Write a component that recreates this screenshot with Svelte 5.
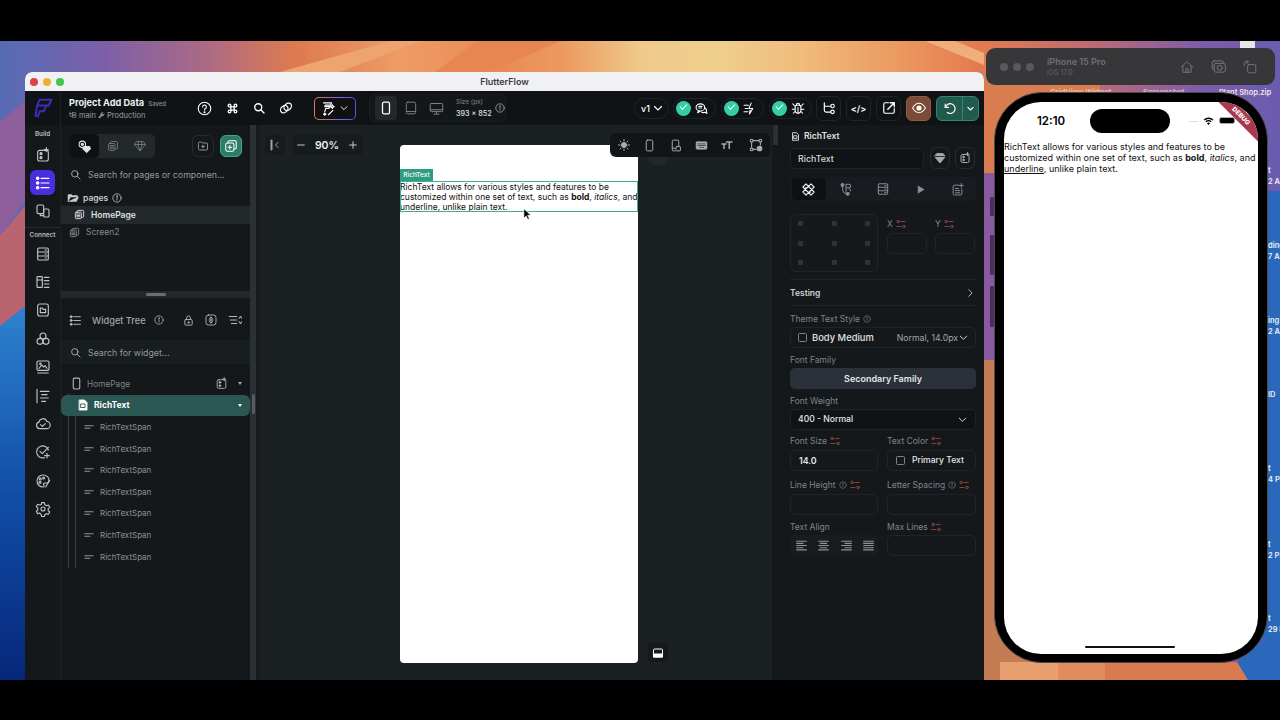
<script>
  const paths = {
    widgetAdd: '<rect x="4" y="5" width="16" height="16" rx="3"/><circle cx="9" cy="10" r="1.6" fill="currentColor"/><circle cx="9" cy="16" r="1.6" fill="currentColor"/><path d="M17 1v6M14 4h6"/>',
    tree: '<circle cx="4" cy="5" r="1.8" fill="currentColor"/><circle cx="4" cy="12" r="1.8" fill="currentColor"/><circle cx="4" cy="19" r="1.8" fill="currentColor"/><path d="M9 5h12M9 12h12M9 19h12"/>',
    screens: '<rect x="3" y="3" width="10" height="13" rx="2"/><rect x="13" y="9" width="8" height="12" rx="2"/><path d="M8 16v3h5"/>',
    db: '<rect x="4" y="3" width="16" height="18" rx="2"/><path d="M4 9h16M4 15h16M15 6h2M15 12h2M15 18h2"/>',
    table: '<rect x="3" y="4" width="8" height="16" rx="1"/><path d="M3 9h8M14 5h7M14 10h7M14 15h7M14 20h7"/>',
    file: '<rect x="4" y="3" width="16" height="18" rx="3"/><path d="M8 9h3l1 2h4v5H8z"/>',
    rings: '<circle cx="12" cy="7.5" r="4.5"/><circle cx="7.5" cy="15.5" r="4.5"/><circle cx="16.5" cy="15.5" r="4.5"/>',
    media: '<rect x="3" y="3" width="18" height="14" rx="2"/><path d="M6 14l4-5 3 3 2-2 3 4M4 21h16"/><circle cx="8" cy="7" r="1"/>',
    logs: '<path d="M3 2v20M8 5h13M10 10h8M8 15h12M10 20h6"/>',
    cloud: '<path d="M7 19a5 5 0 0 1-1-9.8A6 6 0 0 1 17.6 8 5.5 5.5 0 0 1 17 19z"/><path d="M8.5 13l2.5 2.5 4.5-4"/>',
    checkPlus: '<path d="M20 9a9 9 0 1 0-6 11.5"/><path d="M7.5 11l3.5 3.5L20 5M18 14v7M14.5 17.5h7"/>',
    palette: '<path d="M12 3a9 9 0 1 0 0 18c2 0 2-2 1-3s0-3 2-3h3c2 0 3-2 3-4 0-5-4-8-9-8z"/><circle cx="8" cy="9" r="1.5"/><circle cx="13" cy="7.5" r="1.5"/><circle cx="7.5" cy="14" r="1.5"/><path d="M22 11l-6 10"/>',
    gear: '<circle cx="12" cy="12" r="3"/><path d="M10 2.5h4l.6 3 2.6 1.5 2.9-1 2 3.5-2.3 2v3l2.3 2-2 3.5-2.9-1-2.6 1.5-.6 3h-4l-.6-3L6.8 18l-2.9 1-2-3.5 2.3-2v-3l-2.3-2 2-3.5 2.9 1L9.4 5.5z"/>',
    help: '<circle cx="12" cy="12" r="10"/><path d="M9 9.5a3 3 0 1 1 4.5 2.6c-1 .6-1.5 1.2-1.5 2.4"/><circle cx="12" cy="18" r=".8" fill="currentColor"/>',
    cmd: '<path d="M9 9h6v6H9zM9 9H6.5A2.5 2.5 0 1 1 9 6.5zM15 9V6.5A2.5 2.5 0 1 1 17.5 9zM15 15h2.5a2.5 2.5 0 1 1-2.5 2.5zM9 15v2.5A2.5 2.5 0 1 1 6.5 15z"/>',
    search: '<circle cx="10.5" cy="10.5" r="7"/><path d="M16 16l6 6"/>',
    link: '<ellipse cx="9" cy="14" rx="7" ry="5.5" transform="rotate(-40 9 14)"/><ellipse cx="15" cy="10" rx="7" ry="5.5" transform="rotate(-40 15 10)"/>',
    chev: '<path d="M5 9l7 7 7-7"/>',
    chevR: '<path d="M9 4l8 8-8 8"/>',
    phone: '<rect x="6" y="2" width="12" height="20" rx="2.5"/>',
    tablet: '<rect x="4" y="2" width="16" height="20" rx="2.5"/><path d="M4 18h16"/>',
    desktop: '<rect x="2" y="4" width="20" height="13" rx="1.5"/><path d="M2 14h20M12 17v3M8 21h8"/>',
    info: '<circle cx="12" cy="12" r="10"/><path d="M12 11v6"/><circle cx="12" cy="7.5" r=".8" fill="currentColor"/>',
    chat: '<ellipse cx="10" cy="10" rx="8" ry="6.5"/><path d="M6 16l-1 4 4-3M7 8h6M7 11h5M18 11c2 1 4 3 3 6l1 4-4-2c-2 1-4 .6-6-.6"/>',
    bolt: '<path d="M15 2l-4 10h7l-6 10 1-7"/><path d="M2 6h8M4 12h5M2 18h7"/>',
    bug: '<rect x="7" y="7" width="10" height="14" rx="5"/><path d="M9 7a3 3 0 0 1 6 0M12 11v10M3 5l4 4M21 5l-4 4M2 14h5M22 14h-5M4 21l3-3M20 21l-3-3"/>',
    flow: '<path d="M4 3v13a3 3 0 0 0 3 3h8M4 9h11"/><circle cx="18" cy="8.5" r="3"/><circle cx="18" cy="18.5" r="3"/>',
    open: '<path d="M11 3H5a2 2 0 0 0-2 2v14a2 2 0 0 0 2 2h14a2 2 0 0 0 2-2v-6"/><path d="M10 14L21 3M14 3h7v7" stroke-width="2.4"/>',
    eye: '<path d="M1 12c3-5 7-8 11-8s8 3 11 8c-3 5-7 8-11 8s-8-3-11-8z"/><circle cx="12" cy="12" r="3.5" fill="currentColor"/>',
    undo: '<path d="M4 4v6h6"/><path d="M4.5 10A9 9 0 1 1 8 19.5"/>',
    sun: '<circle cx="12" cy="12" r="5" fill="currentColor"/><path d="M12 1v3M12 20v3M1 12h3M20 12h3M4 4l2 2M18 18l2 2M20 4l-2 2M6 18l-2 2"/>',
    phonePart: '<path d="M11 22H8a2 2 0 0 1-2-2V4a2 2 0 0 1 2-2h8a2 2 0 0 1 2 2v9"/><rect x="13" y="14" width="8" height="8" rx="1"/><path d="M6 17h5"/>',
    keyboard: '<rect x="2" y="5" width="20" height="14" rx="2" fill="currentColor"/><path d="M5 9h14M5 12h14M8 15.5h8" stroke="#121517" stroke-dasharray="2 1"/>',
    textSize: '<path d="M11 6h11M16.5 6v13M2 10h8M6 10v9" stroke-width="3"/>',
    nodes: '<rect x="2" y="2" width="5" height="5" rx="2.5"/><rect x="17" y="2" width="5" height="5" rx="2.5"/><rect x="2" y="17" width="5" height="5" rx="2.5"/><path d="M7 4.5h10M4.5 7v10M7 19.5h5M19.5 7v5"/><circle cx="18" cy="18" r="4" fill="currentColor"/>',
    collapse: '<path d="M5 3v18" stroke-width="4"/><path d="M18 7l-5 5 5 5"/>',
    minus: '<path d="M4 12h16"/>',
    plus: '<path d="M12 4v16M4 12h16"/>',
    pagesAdd: '<path d="M3 6a2 2 0 0 1 2-2h4l2 2h8a2 2 0 0 1 2 2v10a2 2 0 0 1-2 2H5a2 2 0 0 1-2-2z"/><path d="M12 10v6M9 13h6"/>',
    stackAdd: '<rect x="3" y="7" width="14" height="14" rx="3"/><path d="M7 7V5a2 2 0 0 1 2-2h10a2 2 0 0 1 2 2v10a2 2 0 0 1-2 2h-2M10 11v6M7 14h6"/>',
    stack: '<rect x="3" y="7" width="13" height="14" rx="2"/><path d="M7 7V5a2 2 0 0 1 2-2h10a2 2 0 0 1 2 2v11a2 2 0 0 1-2 2h-3M6 11h7M6 14h7M6 17h7"/>',
    gem: '<path d="M6 3h12l5 6-11 13L1 9zM1 9h22M8 9l4 13 4-13M9 3L8 9M15 3l1 6"/>',
    gemFill: '<path d="M6 3h12l5 6-11 13L1 9z" fill="currentColor"/><path d="M1 9h22" stroke="#1b2023"/>',
    libs: '<circle cx="8" cy="8" r="6" fill="none"/><circle cx="8" cy="8" r="2" fill="currentColor"/><path d="M11 12h10l2 4-7 7-7-7z" fill="currentColor"/>',
    wand: '<path d="M4 3h13l-1.5 3.5H7L6 9h8l-1.5 3H7.5L6 17" /><path d="M12 22l7-7M18 6l1 2 2 1-2 1-1 2-1-2-2-1 2-1zM6 19l.6 1.4L8 21l-1.4.6L6 23l-.6-1.4L4 21l1.4-.6z"/>',
    folder: '<path d="M2 19V6a1 1 0 0 1 1-1h6l2 2h9a1 1 0 0 1 1 1v2H7l-5 9h17l4-9h-2" fill="currentColor"/>',
    lock: '<rect x="4" y="10" width="16" height="12" rx="2"/><path d="M8 10V6a4 4 0 0 1 8 0v4"/><circle cx="12" cy="16" r="1.4" fill="currentColor"/>',
    expand: '<rect x="2" y="2" width="20" height="20" rx="5"/><path d="M12 6v12M9 9l3-3 3 3M9 15l3 3 3-3M8 12h8"/>',
    sortList: '<path d="M2 6h13M4 12h11M6 18h9M19 9l2.5-3 2.500 3M19 15l2.500 3 2.500-3"/>',
    doc: '<path d="M5 2h10l5 5v15H5z" fill="currentColor"/><rect x="8" y="10" width="8" height="7" stroke="#2a5752" fill="none"/>',
    lines: '<path d="M2 9h20M2 15h12" stroke-width="2.6"/>',
    docTiny: '<path d="M5 2h10l5 5v15H5z"/><rect x="8" y="10" width="8" height="7"/>',
    tools: '<path d="M3 8l5-5 13 13-5 5zM16 3l5 5L8 21l-5-5z"/><path d="M6 11l2-2M13 18l2-2M11 6l2 2"/>',
    branch: '<circle cx="6" cy="5" r="2.5" fill="currentColor"/><circle cx="15" cy="20" r="2.5" fill="currentColor"/><path d="M6 8c0 8 3 12 7 12M12 4h5a2 2 0 0 1 0 6h-5zM12 4v12M17 10l3 5"/>',
    play: '<path d="M6 3l15 9-15 9z" fill="currentColor" stroke="none"/>',
    noteAdd: '<path d="M20 11v9a2 2 0 0 1-2 2H6a2 2 0 0 1-2-2V6a2 2 0 0 1 2-2h8M8 10h6M8 14h8M8 18h8M19 1v7M15.5 4.5h7"/>',
    tune: '<circle cx="5" cy="6" r="3"/><path d="M12 6h10M2 18h10"/><circle cx="19" cy="18" r="3"/>',
    alignL: '<path d="M3 4h18M3 8h12M3 12h18M3 16h12M3 20h18"/>',
    alignC: '<path d="M3 4h18M6 8h12M3 12h18M6 16h12M3 20h18"/>',
    alignR: '<path d="M3 4h18M9 8h12M3 12h18M9 16h12M3 20h18"/>',
    alignJ: '<path d="M3 4h18M3 8h18M3 12h18M3 16h18M3 20h18"/>',
    home: '<path d="M2 12L12 3l10 9M5 10v11h14V10M10 21v-6h4v6"/>',
    camera: '<rect x="2" y="3" width="18" height="14" rx="3"/><rect x="5" y="7" width="18" height="14" rx="3" fill="#37373a"/><circle cx="14" cy="14" r="4"/>',
    rotate: '<rect x="8" y="8" width="14" height="14" rx="2"/><path d="M2 10V6a3 3 0 0 1 3-3h4M6 0L9 3 6 6"/>',
    mainBranch: '<path d="M3 3v11a2 2 0 0 0 2 2h4M3 8h6"/><rect x="10" y="5" width="11" height="6" rx="1"/><rect x="10" y="13" width="11" height="6" rx="1"/>',
    wrench: '<path d="M21 7a6 6 0 0 1-8 6l-8 8-3-3 8-8a6 6 0 0 1 7-8l-4 4 4 4z" fill="currentColor"/>'
  };

  const railGroups = {
    build: ['widgetAdd', 'tree', 'screens'],
    connect: ['db', 'table', 'file', 'rings', 'media', 'logs', 'cloud', 'checkPlus', 'palette', 'gear']
  };
  const spans = Array(7).fill('RichTextSpan');
  const dots = Array(9).fill(0);
  const desktopLabels = [
    { top: 165, a: 't', b: '2 AM' },
    { top: 240, a: 'ding', b: '7 AM' },
    { top: 315, a: 'ing', b: '2 AM' },
    { top: 389, a: 'ID', b: '' },
    { top: 463, a: 't', b: '4 PM' },
    { top: 539, a: 't', b: '2 PM' },
    { top: 613, a: 't', b: '29 PM' }
  ];
</script>

{#snippet ic(name, size = 14, sw = 1.8)}
  <svg class="ic" viewBox="0 0 24 24" width={size} height={size} stroke-width={sw}>{@html paths[name]}</svg>
{/snippet}

{#snippet tune()}
  <span class="tune">{@render ic('tune', 10, 2)}</span>
{/snippet}

<div class="screen">
  <div class="desktop">
    <svg class="wall" viewBox="0 0 1280 639" preserveAspectRatio="none">
      <defs>
        <linearGradient id="topband" x1="0" x2="1" y1="0" y2="0">
          <stop offset="0" stop-color="#566bb5" />
          <stop offset=".08" stop-color="#7c5fa9" />
          <stop offset=".16" stop-color="#aa6a86" />
          <stop offset=".23" stop-color="#dd7a50" />
          <stop offset=".3125" stop-color="#ee9c64" />
          <stop offset=".39" stop-color="#ea8a55" />
          <stop offset=".44" stop-color="#ec9a60" />
          <stop offset=".5" stop-color="#efc98a" />
          <stop offset=".56" stop-color="#efcf8c" />
          <stop offset=".625" stop-color="#f0bc7c" />
          <stop offset=".7" stop-color="#eb9a60" />
          <stop offset=".76" stop-color="#e57c50" />
          <stop offset=".86" stop-color="#b86a78" />
          <stop offset=".94" stop-color="#7c5cab" />
          <stop offset="1" stop-color="#6a5cb0" />
        </linearGradient>
        <linearGradient id="leftblue" x1="0" x2="0" y1="0" y2="1">
          <stop offset="0" stop-color="#2f82d0" />
          <stop offset=".5" stop-color="#114ea8" />
          <stop offset="1" stop-color="#06277a" />
        </linearGradient>
      </defs>
      <rect width="1280" height="639" fill="url(#topband)" />
      <path d="M0 80 L25 60 V160 L0 195z" fill="#8d5f9c" />
      <path d="M0 195 L25 165 V265 L0 290z" fill="#b9646f" />
      <path d="M0 285 L25 265 V639 H0z" fill="url(#leftblue)" />
      <path d="M280 31 L390 0 H420 L340 31z" fill="#eda46e" />
      <path d="M435 31 L477 0 H560 L490 31z" fill="#e8864f" />
      <path d="M925 0 L984 24 V12 L955 0z" fill="#f0ae7a" />
      <!-- strip between window and phone -->
      <rect x="984" y="31" width="116" height="101" fill="#d97c50" />
      <rect x="984" y="132" width="116" height="187" fill="#8a5aa0" />
      <rect x="984" y="319" width="116" height="320" fill="#c47c52" />
      <!-- strip right of the phone -->
      <path d="M1262 150H1280V639H1248L1237 621L1262 600z" fill="#2a68bc" />
      <rect x="1000" y="621" width="58" height="18" fill="#e8a070" />
      <rect x="1058" y="621" width="47" height="18" fill="#e08c5c" />
      <path d="M1105 621H1237L1248 639H1105z" fill="#d87a50" />
    </svg>

    <!-- FlutterFlow window -->
    <section class="window">
      <header class="titlebar">
        <span class="light red"></span><span class="light yellow"></span><span class="light green"></span>
        <span class="title">FlutterFlow</span>
      </header>

      <div class="appbar">
        <div class="logo">
          <svg viewBox="0 0 24 24" width="20" height="20" fill="none" stroke="#3f2bb4" stroke-width="2.4"><path d="M8 2h14l-3 7H5zM5 9h11l-3 7H8l-2 6-3-1z" /></svg>
        </div>
        <div class="project">
          <div class="pname">Project Add Data <small>Saved</small></div>
          <div class="psub">{@render ic('mainBranch', 8, 2)} main {@render ic('wrench', 7)} Production</div>
        </div>
        <div class="quick">
          {@render ic('help', 15, 1.8)}
          {@render ic('cmd', 13, 2.4)}
          {@render ic('search', 12, 2.8)}
          {@render ic('link', 14, 2.2)}
        </div>
        <div class="ai">{@render ic('wand', 15, 1.8)}{@render ic('chev', 10, 2.2)}</div>
        <div class="devices">
          <span class="dev on">{@render ic('phone', 14, 2.2)}</span>
          <span class="dev">{@render ic('tablet', 14, 1.6)}</span>
          <span class="dev">{@render ic('desktop', 15, 1.6)}</span>
          <div class="size"><span>Size (px)</span><b>393 × 852</b></div>
          <span class="dev-info">{@render ic('info', 10, 1.8)}</span>
        </div>
        <div class="actions">
          <div class="pill v">v1 {@render ic('chev', 12, 2.2)}</div>
          <div class="pill"><span class="ok"></span>{@render ic('chat', 13, 2)}</div>
          <div class="pill"><span class="ok"></span>{@render ic('bolt', 13, 2)}</div>
          <div class="pill"><span class="ok"></span>{@render ic('bug', 14, 1.8)}</div>
          <span class="sq first">{@render ic('flow', 14, 2)}</span>
          <span class="sq"><span class="code">&lt;/&gt;</span></span>
          <span class="sq">{@render ic('open', 14, 2)}</span>
          <span class="sq eye">{@render ic('eye', 14, 1.8)}</span>
          <span class="undo"><span>{@render ic('undo', 13, 2.2)}</span><span>{@render ic('chev', 9, 3)}</span></span>
        </div>
      </div>

      <div class="main">
        <nav class="rail">
          <div class="rail-label">Build</div>
          {#each railGroups.build as name}
            <span class="rail-btn" class:active={name === 'tree'}>{@render ic(name, 16, 1.7)}</span>
          {/each}
          <div class="rail-sep"></div>
          <div class="rail-label">Connect</div>
          {#each railGroups.connect as name}
            <span class="rail-btn">{@render ic(name, 16, 1.7)}</span>
          {/each}
        </nav>

        <aside class="side">
          <div class="pages">
            <div class="side-tabs">
              <div class="seg">
                <span class="seg-on">{@render ic('libs', 13, 2)}</span>
                <span>{@render ic('stack', 12, 1.5)}</span>
                <span>{@render ic('gem', 12, 1.5)}</span>
              </div>
              <span class="mini">{@render ic('pagesAdd', 12, 1.6)}</span>
              <span class="mini on">{@render ic('stackAdd', 14, 1.8)}</span>
            </div>
            <div class="search">{@render ic('search', 10, 2)}<span>Search for pages or componen...</span></div>
            <div class="folder">{@render ic('folder', 12, 1)}<b>pages</b>{@render ic('info', 10, 1.8)}</div>
            <div class="page sel">{@render ic('stack', 11, 2)}<b>HomePage</b></div>
            <div class="page">{@render ic('stack', 11, 2)}<span>Screen2</span></div>
          </div>
          <div class="side-split"><span></span></div>
          <div class="tree-head">
            {@render ic('tree', 13, 1.8)}
            <span class="tree-title">Widget Tree</span>
            {@render ic('info', 10, 1.8)}
            <span class="tree-tools">
              {@render ic('lock', 11, 2)}
              {@render ic('expand', 12, 1.8)}
              {@render ic('sortList', 14, 2)}
            </span>
          </div>
          <div class="search band">{@render ic('search', 10, 2)}<span>Search for widget...</span></div>
          <div class="tree">
            <div class="node home">
              {@render ic('phone', 13, 2)}<span>HomePage</span>
              <span class="node-end">{@render ic('widgetAdd', 13, 1.6)}<i class="caret"></i></span>
            </div>
            <div class="node rich">
              {@render ic('doc', 12)}<b>RichText</b>
              <span class="node-end"><i class="caret"></i></span>
            </div>
            {#each spans as label}
              <div class="node span">{@render ic('lines', 10)}<span>{label}</span></div>
            {/each}
          </div>
        </aside>

        <div class="gutter"><span></span></div>

        <div class="canvas">
          <div class="canvas-top">
            <span class="ctl">{@render ic('collapse', 12, 2)}</span>
            <div class="zoomer">
              {@render ic('minus', 10, 2.4)}
              <b>90%</b>
              {@render ic('plus', 10, 2.4)}
            </div>
          </div>
          <div class="device">
            <div class="badge">RichText</div>
            <div class="selected">RichText allows for various styles and features to be customized within one set of text, such as <b>bold</b>, <i>italics</i>, and underline, unlike plain text.</div>
          </div>
          <div class="floater">
            {@render ic('sun', 12, 2)}
            {@render ic('phone', 13, 1.8)}
            {@render ic('phonePart', 13, 1.8)}
            {@render ic('keyboard', 13, 1)}
            {@render ic('textSize', 12, 2)}
            <span class="fl-sep">{@render ic('nodes', 14, 1.8)}</span>
          </div>
          <div class="notch-pill"></div>
          <span class="drawer"><svg viewBox="0 0 24 24" width="12" height="12" fill="none" stroke="#fff" stroke-width="2"><rect x="3" y="4" width="18" height="16" rx="2" /><rect x="3" y="14" width="18" height="6" fill="#fff" /></svg></span>
          <svg class="cursor" viewBox="0 0 12 18" width="9" height="13"><path d="M1 1v13l3.2-3 2.3 5 2-1-2.3-5h4.3z" fill="#000" stroke="#fff" stroke-width=".8" /></svg>
        </div>

        <div class="vscroll"><span></span></div>

        <aside class="props">
          <div class="p-head">{@render ic('docTiny', 9, 2.4)}<b>RichText</b></div>
          <div class="p-name">
            <div class="field name">RichText</div>
            <span class="mini">{@render ic('gemFill', 12)}</span>
            <span class="mini">{@render ic('widgetAdd', 12, 2)}</span>
          </div>
          <div class="p-tabs">
            <span class="on">{@render ic('tools', 15, 1.7)}</span>
            <span>{@render ic('branch', 14, 1.8)}</span>
            <span>{@render ic('db', 14, 1.8)}</span>
            <span>{@render ic('play', 11)}</span>
            <span>{@render ic('noteAdd', 13, 1.8)}</span>
          </div>
          <div class="p-pos">
            <div class="anchor">
              {#each dots as _}<i></i>{/each}
            </div>
            <div class="xy">
              <div><label>X {@render tune()}</label><div class="field"></div></div>
              <div><label>Y {@render tune()}</label><div class="field"></div></div>
            </div>
          </div>
          <div class="testing"><b>Testing</b>{@render ic('chevR', 10, 2)}</div>

          <div class="form">
            <label>Theme Text Style <span class="li">{@render ic('info', 8, 2)}</span></label>
            <div class="field theme">
              <i class="swatch"></i><b>Body Medium</b>
              <span class="theme-val">Normal, 14.0px</span>{@render ic('chev', 11, 2)}
            </div>
            <label class="gap">Font Family</label>
            <div class="family">Secondary Family</div>
            <label class="gap wide">Font Weight</label>
            <div class="field weight"><span>400 - Normal</span>{@render ic('chev', 11, 2)}</div>
            <div class="two">
              <div><label>Font Size {@render tune()}</label><div class="field val">14.0</div></div>
              <div><label>Text Color {@render tune()}</label><div class="field val color"><i class="swatch"></i>Primary Text</div></div>
            </div>
            <div class="two mid">
              <div><label>Line Height <span class="li">{@render ic('info', 8, 2)}</span> {@render tune()}</label><div class="field"></div></div>
              <div><label>Letter Spacing <span class="li">{@render ic('info', 8, 2)}</span> {@render tune()}</label><div class="field"></div></div>
            </div>
            <div class="two last">
              <div>
                <label>Text Align</label>
                <div class="aligns">
                  {@render ic('alignL', 13, 2)}
                  {@render ic('alignC', 13, 2)}
                  {@render ic('alignR', 13, 2)}
                  {@render ic('alignJ', 13, 2)}
                </div>
              </div>
              <div><label>Max Lines {@render tune()}</label><div class="field"></div></div>
            </div>
          </div>
        </aside>
      </div>
    </section>

    <!-- Simulator -->
    <div class="file-peek"></div>
    <div class="d-top a">GridView Widget</div>
    <div class="d-top b">Screenshot</div>
    <div class="d-top c">Plant Shop.zip</div>
    {#each desktopLabels as l}
      <div class="d-side" style="top: {l.top - 41}px">{l.a}<br />{l.b}</div>
    {/each}

    <div class="sim-bar">
      <span class="sim-dots"><i></i><i></i><i></i></span>
      <div class="sim-name"><b>iPhone 15 Pro</b><span>iOS 17.0</span></div>
      <div class="sim-tools">
        {@render ic('home', 14, 1.6)}
        {@render ic('camera', 15, 1.6)}
        {@render ic('rotate', 14, 1.6)}
      </div>
    </div>

    <span class="side-key k1"></span>
    <span class="side-key k2"></span>
    <span class="side-key k3"></span>
    <div class="iphone">
      <div class="display">
        <div class="island"></div>
        <div class="status">
          <span class="clock">12:10</span>
          <span class="status-r">
            <span class="sig">····</span>
            <svg viewBox="0 0 24 18" width="11" height="8" fill="none" stroke="#000" stroke-width="3"><path d="M2 7a14 14 0 0 1 20 0M6 11a8.500 8.500 0 0 1 12 0" /><path d="M12 18l-3.500-4a5 5 0 0 1 7 0z" fill="#000" stroke="none" /></svg>
            <i class="batt"></i>
          </span>
        </div>
        <div class="ribbon">DEBUG</div>
        <div class="phone-text">RichText allows for various styles and features to be customized within one set of text, such as <b>bold</b>, <i>italics</i>, and <u>underline</u>, unlike plain text.</div>
        <div class="home-bar"></div>
      </div>
    </div>
  </div>
</div>

<style>
  :global(body) {
    margin: 0;
    background: #000;
  }
  .screen {
    width: 1280px;
    height: 720px;
    background: #000;
    overflow: hidden;
    padding-top: 41px;
    box-sizing: border-box;
    font-family: Inter, "Liberation Sans", sans-serif;
    color: #fff;
  }
  .desktop {
    position: relative;
    width: 1280px;
    height: 639px;
    overflow: hidden;
  }
  .wall {
    position: absolute;
    inset: 0;
    width: 100%;
    height: 100%;
  }
  .ic {
    fill: none;
    stroke: currentColor;
    stroke-linecap: round;
    stroke-linejoin: round;
    flex: none;
    display: block;
  }

  .window {
    position: absolute;
    left: 25px;
    top: 31px;
    width: 959px;
    height: 608px;
    border-radius: 7px 7px 0 0;
    overflow: hidden;
    display: flex;
    flex-direction: column;
    background: #14181b;
  }
  .titlebar {
    height: 19px;
    flex: none;
    background: #f1f1f3;
    display: flex;
    align-items: center;
    padding-left: 5px;
    gap: 5px;
    position: relative;
  }
  .light {
    width: 8px;
    height: 8px;
    border-radius: 50%;
  }
  .red { background: #e0404a; }
  .yellow { background: #eeb032; }
  .green { background: #3cc84a; }
  .title {
    position: absolute;
    left: 0;
    right: 0;
    text-align: center;
    font-size: 9px;
    font-weight: 600;
    color: #3c3c3e;
  }

  .appbar {
    height: 34px;
    flex: none;
    background: #101315;
    display: flex;
    align-items: center;
    color: #fff;
  }
  .logo {
    width: 36px;
    flex: none;
    display: flex;
    justify-content: center;
    border-right: 1px solid #1d2124;
    box-sizing: border-box;
    height: 34px;
    align-items: center;
  }
  .project {
    margin-left: 8px;
    width: 120px;
    flex: none;
  }
  .pname {
    font-size: 9.2px;
    font-weight: 700;
    white-space: nowrap;
    color: #eef0f1;
  }
  .pname small {
    font-size: 6px;
    font-weight: 500;
    color: #8b9094;
    margin-left: 2px;
  }
  .psub {
    margin-top: 3px;
    font-size: 7.5px;
    color: #9a9fa3;
    display: flex;
    align-items: center;
    gap: 2px;
  }
  .quick {
    display: flex;
    align-items: center;
    gap: 14px;
    margin-left: 8px;
    width: 118px;
    flex: none;
  }
  .ai {
    width: 42px;
    height: 23px;
    box-sizing: border-box;
    border-radius: 5px;
    border: 1px solid transparent;
    background: linear-gradient(#0e1012, #0e1012) padding-box, linear-gradient(90deg, #e0785a, #8a60d8 60%, #5a50e0) border-box;
    display: flex;
    align-items: center;
    justify-content: center;
    gap: 3px;
    margin-left: -1px;
    flex: none;
  }
  .devices {
    margin-left: 13px;
    width: 137px;
    height: 28px;
    box-sizing: border-box;
    background: #14171a;
    border: 1px solid #1b1f22;
    border-radius: 6px;
    display: flex;
    align-items: center;
    padding-left: 5px;
    flex: none;
    color: #7d8286;
  }
  .dev {
    width: 22px;
    height: 24px;
    display: flex;
    align-items: center;
    justify-content: center;
    border-radius: 4px;
    margin-right: 3px;
  }
  .dev.on {
    background: #22272a;
    color: #fff;
  }
  .size {
    margin-left: 6px;
    display: flex;
    flex-direction: column;
    font-size: 6.5px;
    color: #80858a;
    gap: 3px;
    width: 35px;
  }
  .size b {
    font-size: 7.2px;
    font-weight: 500;
    color: #dfe2e3;
    white-space: nowrap;
  }
  .dev-info {
    margin-left: 4px;
    color: #aab0b3;
  }
  .actions {
    margin-left: 128px;
    display: flex;
    align-items: center;
    flex: none;
  }
  .pill {
    width: 43px;
    height: 21px;
    box-sizing: border-box;
    border: 1px solid #1f2427;
    border-radius: 11px;
    display: flex;
    align-items: center;
    gap: 4px;
    padding-left: 2px;
    margin-right: 5px;
  }
  .pill.v {
    padding: 0 5px 0 6px;
    font-size: 9px;
    gap: 2px;
    width: 35px;
    font-weight: 500;
    margin-right: 4px;
  }
  .ok {
    width: 15px;
    height: 15px;
    border-radius: 50%;
    background: #32d0a4;
    position: relative;
    flex: none;
  }
  .ok::after {
    content: "";
    position: absolute;
    left: 4px;
    top: 3.5px;
    width: 6px;
    height: 3px;
    border: solid #fff;
    border-width: 0 0 1.5px 1.5px;
    transform: rotate(-45deg);
  }
  .sq {
    width: 25px;
    height: 25px;
    box-sizing: border-box;
    border: 1px solid #1f2427;
    border-radius: 6px;
    display: flex;
    align-items: center;
    justify-content: center;
    margin-right: 5px;
  }
  .sq.first {
    margin-left: -1px;
  }
  .code {
    font-size: 9px;
    font-weight: 600;
  }
  .eye {
    background: #7c4a38;
    border-color: #945a44;
  }
  .undo {
    display: flex;
    width: 43px;
    height: 25px;
    box-sizing: border-box;
    border: 1px solid #2d8a72;
    background: #225a4e;
    border-radius: 6px;
  }
  .undo span {
    display: flex;
    align-items: center;
    justify-content: center;
  }
  .undo span:first-child {
    width: 25px;
    border-right: 1px solid #2d8a72;
  }
  .undo span:last-child {
    flex: 1;
  }

  .main {
    flex: 1;
    min-height: 0;
    display: flex;
  }
  .rail {
    width: 36px;
    flex: none;
    background: #14181b;
    border-right: 1px solid #1d2124;
    box-sizing: border-box;
    display: flex;
    flex-direction: column;
    align-items: center;
    padding-top: 5px;
    color: #bfc4c6;
  }
  .rail-label {
    font-size: 6.3px;
    font-weight: 600;
    color: #b8bcbe;
    height: 9px;
    line-height: 9px;
  }
  .rail-btn {
    width: 25px;
    height: 25px;
    margin-bottom: 3.4px;
    display: flex;
    align-items: center;
    justify-content: center;
    border-radius: 6px;
  }
  .rail-label + .rail-btn {
    margin-top: 3px;
  }
  .rail-sep + .rail-label + .rail-btn {
    margin-top: 1px;
  }
  .rail-btn.active {
    background: #4a2ee0;
    color: #fff;
  }
  .rail-sep {
    width: 100%;
    height: 1px;
    background: #2a2e31;
    margin: 0 0 3px;
  }
  .side {
    width: 189px;
    flex: none;
    background: #14181b;
    display: flex;
    flex-direction: column;
  }
  .pages {
    height: 166px;
    flex: none;
  }
  .side-tabs {
    display: flex;
    align-items: center;
    padding: 9px 7px 0 9px;
    gap: 6px;
  }
  .seg {
    width: 85px;
    height: 24px;
    background: #23282b;
    border-radius: 5px;
    display: flex;
    align-items: center;
    margin-right: 31px;
    color: #80868a;
  }
  .seg span {
    width: 27px;
    height: 24px;
    display: flex;
    align-items: center;
    justify-content: center;
  }
  .seg .seg-on {
    width: 29px;
    background: #0e1113;
    color: #e2e4e5;
    border-radius: 5px;
  }
  .mini {
    width: 22px;
    height: 22px;
    box-sizing: border-box;
    border: 1px solid #262b2e;
    border-radius: 6px;
    display: flex;
    align-items: center;
    justify-content: center;
    color: #a4a9ac;
    flex: none;
  }
  .mini.on {
    background: #2c7c66;
    border-color: #3fa88a;
    color: #fff;
  }
  .search {
    display: flex;
    align-items: center;
    gap: 7px;
    height: 24px;
    padding-left: 9px;
    margin-top: 4.5px;
    font-size: 8.8px;
    color: #94999d;
  }
  .search .ic {
    width: 11px;
    height: 11px;
    color: #aab0b3;
  }
  .folder {
    display: flex;
    align-items: center;
    gap: 4px;
    padding-left: 6px;
    height: 17px;
    margin-top: 2.5px;
    font-size: 8.5px;
    color: #c6cbcd;
  }
  .folder .ic:last-child {
    color: #d0d3d5;
  }
  .folder b {
    font-weight: 600;
  }
  .page {
    height: 17.5px;
    display: flex;
    align-items: center;
    gap: 6px;
    padding-left: 13px;
    font-size: 8.5px;
    color: #84898d;
  }
  .page.sel {
    background: #23282b;
    color: #dfe1e2;
    padding-left: 13px;
  }
  .page.sel b {
    font-weight: 600;
  }
  .page:last-child {
    padding-left: 8px;
  }
  .side-split {
    height: 7px;
    flex: none;
    background: #23282c;
    display: flex;
    justify-content: center;
    align-items: center;
  }
  .side-split span {
    width: 20px;
    height: 3px;
    background: #6a6f74;
    border-radius: 2px;
  }
  .tree-head {
    height: 42px;
    box-sizing: border-box;
    padding-top: 2px;
    flex: none;
    display: flex;
    align-items: center;
    padding-left: 8px;
    gap: 8px;
    color: #b3b8ba;
  }
  .tree-title {
    font-size: 9.2px;
    font-weight: 500;
    color: #a3a8ab;
    margin-left: 2px;
  }
  .tree-tools {
    display: flex;
    align-items: center;
    gap: 11px;
    margin-left: 11px;
  }
  .search.band {
    margin-top: 0;
    background: #181d20;
    font-size: 8.8px;
  }
  .tree {
    position: relative;
    padding-top: 9px;
  }
  .tree::before,
  .tree::after {
    content: "";
    position: absolute;
    width: 1px;
    background: #3a3f42;
  }
  .tree::before { left: 7px; top: 29px; height: 175px; }
  .tree::after { left: 14px; top: 52px; height: 152px; }
  .node {
    height: 21.6px;
    display: flex;
    align-items: center;
    font-size: 8px;
    color: #888d91;
  }
  .node.home {
    padding-left: 9px;
    gap: 4px;
    color: #7e8387;
    font-size: 8.3px;
  }
  .node.home .ic:first-child {
    color: #b3b8ba;
  }
  .node-end {
    margin-left: auto;
    display: flex;
    align-items: center;
    gap: 10px;
    padding-right: 8px;
    color: #a7abae;
  }
  .caret {
    width: 0;
    height: 0;
    border: 2.5px solid transparent;
    border-top: 3px solid currentColor;
    border-bottom: none;
  }
  .node.rich {
    position: relative;
    z-index: 1;
    background: #2a5752;
    border-radius: 6px;
    padding-left: 16px;
    gap: 5px;
    color: #fff;
    font-size: 8.5px;
  }
  .node.rich .node-end {
    color: #fff;
  }
  .node.span {
    padding-left: 23px;
    gap: 6px;
    color: #8c9195;
  }
  .gutter {
    width: 6px;
    flex: none;
    background: #2b3035;
    position: relative;
  }
  .gutter span {
    position: absolute;
    left: 2px;
    top: 269px;
    width: 3px;
    height: 20px;
    border-radius: 2px;
    background: #565b60;
  }
  .canvas {
    width: 516px;
    flex: none;
    background: #1b2023;
    border-left: 4px solid #181c1f;
    box-sizing: border-box;
    position: relative;
    padding-left: 140px;
    padding-top: 20px;
  }
  .canvas-top {
    position: absolute;
    left: 5px;
    top: 10px;
    display: flex;
    align-items: center;
    gap: 8px;
  }
  .ctl {
    width: 20px;
    height: 20px;
    background: #171b1e;
    border-radius: 4px;
    display: flex;
    align-items: center;
    justify-content: center;
    color: #9da2a5;
  }
  .zoomer {
    width: 70px;
    height: 20px;
    background: #171b1e;
    border-radius: 4px;
    box-sizing: border-box;
    padding: 0 5px 0 3px;
    display: flex;
    align-items: center;
    justify-content: space-between;
    color: #c5c8ca;
  }
  .zoomer b {
    font-size: 10.5px;
    font-weight: 600;
    color: #eceeef;
  }
  .device {
    width: 238px;
    height: 518px;
    background: #fff;
    border-radius: 4px;
    padding-top: 24px;
    box-sizing: border-box;
  }
  .badge {
    width: 33px;
    height: 12px;
    line-height: 12px;
    background: #2f9b7f;
    color: #fff;
    font-size: 6.5px;
    font-weight: 500;
    text-align: center;
  }
  .selected {
    height: 30.5px;
    outline: 1px solid #3fae94;
    outline-offset: -1px;
    color: #111;
    font-size: 8.5px;
    line-height: 10px;
    padding-top: 1px;
    box-sizing: border-box;
  }
  .floater {
    position: absolute;
    left: 350px;
    top: 8px;
    width: 160px;
    height: 24px;
    box-sizing: border-box;
    background: #121517;
    border-radius: 6px;
    display: flex;
    align-items: center;
    gap: 13px;
    padding-left: 8px;
    color: #a8adb0;
  }
  .fl-sep {
    margin-left: 3px;
  }
  .notch-pill {
    position: absolute;
    left: 388px;
    top: 32px;
    width: 20px;
    height: 8px;
    background: #23282b;
    border-radius: 0 0 8px 8px;
  }
  .drawer {
    position: absolute;
    left: 388px;
    top: 518px;
    width: 20px;
    height: 19px;
    background: #15191b;
    border-radius: 4px;
    display: flex;
    align-items: center;
    justify-content: center;
  }
  .cursor {
    position: absolute;
    left: 263px;
    top: 83px;
  }
  .vscroll {
    width: 7px;
    flex: none;
    background: #14181b;
    position: relative;
  }
  .vscroll span {
    position: absolute;
    left: 1px;
    top: 0;
    width: 5px;
    height: 20px;
    background: #2c3135;
  }
  .props {
    flex: 1;
    min-width: 0;
    background: #14181b;
    padding: 0 8px 0 11px;
    box-sizing: border-box;
    font-size: 8.5px;
  }
  .p-head {
    height: 22px;
    display: flex;
    align-items: center;
    gap: 4px;
    font-size: 8.6px;
    color: #dfe2e3;
    padding-left: 1px;
  }
  .p-head b {
    font-weight: 600;
  }
  .p-name {
    display: flex;
    gap: 5px;
    align-items: center;
  }
  .p-name .mini {
    width: 20px;
  }
  .field {
    height: 21px;
    box-sizing: border-box;
    border: 1px solid #1f2427;
    border-radius: 5px;
    background: #14181b;
    display: flex;
    align-items: center;
  }
  .field.name {
    width: 134px;
    background: #101315;
    padding-left: 7px;
    font-size: 8.8px;
    color: #d8dbdc;
    font-weight: 500;
    margin-right: 1px;
  }
  .p-tabs {
    display: grid;
    grid-template-columns: repeat(5, 1fr);
    height: 24px;
    margin-top: 8px;
    align-items: center;
    justify-items: center;
    background: #181c20;
    border-radius: 5px;
    color: #878c90;
  }
  .p-tabs span {
    display: flex;
    align-items: center;
    justify-content: center;
    height: 22px;
    width: 34px;
    border-radius: 4px;
  }
  .p-tabs .on {
    background: #0e1113;
    color: #f0f2f2;
  }
  .p-pos {
    display: flex;
    margin-top: 13px;
    gap: 9px;
    padding-bottom: 7px;
    border-bottom: 1px solid #202427;
  }
  .anchor {
    width: 88px;
    height: 58px;
    box-sizing: border-box;
    border: 1px solid #1f2427;
    border-radius: 6px;
    display: grid;
    grid-template-columns: repeat(3, 5px);
    grid-template-rows: repeat(3, 5px);
    justify-content: space-between;
    align-content: space-between;
    padding: 6px 7px;
    background: #15191c;
  }
  .anchor i {
    background: #2e3336;
    border-radius: 1px;
  }
  .xy {
    display: flex;
    gap: 8px;
    padding-top: 3px;
  }
  .xy > div {
    width: 40px;
  }
  .xy label {
    margin-bottom: 2px;
  }
  label {
    display: flex;
    align-items: center;
    gap: 3px;
    height: 14px;
    color: #7f8488;
    font-size: 8.5px;
    white-space: nowrap;
  }
  .tune {
    color: #a04a46;
    display: inline-flex;
  }
  .li {
    color: #70757a;
    display: inline-flex;
  }
  .testing {
    height: 25px;
    display: flex;
    align-items: center;
    justify-content: space-between;
    border-bottom: 1px solid #202427;
    color: #d0d3d5;
    font-size: 8.5px;
    padding-right: 1px;
  }
  .testing b {
    font-weight: 600;
  }
  .form {
    padding-top: 6px;
  }
  .gap {
    margin-top: 4.5px;
  }
  .gap.wide {
    margin-top: 5px;
  }
  .theme {
    padding: 0 6px 0 7px;
    margin-top: 1px;
    gap: 5px;
    color: #e0e2e3;
  }
  .theme b {
    font-size: 9.4px;
    font-weight: 500;
  }
  .theme-val {
    margin-left: auto;
    font-size: 8.7px;
    color: #a1a6a9;
    margin-right: -5px;
  }
  .swatch {
    width: 7px;
    height: 7px;
    border: 1px solid #7e8387;
    border-radius: 1.5px;
    flex: none;
  }
  .family {
    height: 21px;
    background: #2b3138;
    border-radius: 5px;
    display: flex;
    align-items: center;
    justify-content: center;
    font-size: 9px;
    font-weight: 600;
    color: #e4e6e7;
    margin-top: 1px;
  }
  .weight {
    justify-content: space-between;
    padding: 0 7px;
    background: #101315;
    font-size: 8.6px;
    font-weight: 500;
    color: #e4e6e7;
    margin-top: 1px;
  }
  .two {
    display: grid;
    grid-template-columns: 88px 89px;
    gap: 9px;
    margin-top: 4px;
  }
  .two.mid {
    margin-top: 7px;
  }
  .two.last {
    margin-top: 5px;
  }
  .two label {
    margin-bottom: 2px;
  }
  .two.last label {
    margin-bottom: 1px;
  }
  .val {
    padding-left: 8px;
    font-size: 8.8px;
    font-weight: 600;
    color: #e4e6e7;
  }
  .val.color {
    font-size: 8.6px;
    font-weight: 500;
    gap: 7px;
  }
  .aligns {
    display: flex;
    justify-content: space-between;
    align-items: center;
    height: 21px;
    padding: 0 3px 0 5px;
    background: #181c20;
    border-radius: 5px;
    color: #8e9397;
  }

  .file-peek {
    position: absolute;
    left: 1240px;
    top: 0;
    width: 15px;
    height: 7px;
    background: #e6e6e8;
  }
  .d-top {
    position: absolute;
    top: 47px;
    font-size: 7.5px;
    font-weight: 600;
    color: #f0e4e0;
    white-space: nowrap;
  }
  .d-top.a { left: 1050px; opacity: .7; }
  .d-top.b { left: 1143px; opacity: .7; }
  .d-top.c { left: 1219px; }
  .d-side {
    position: absolute;
    left: 1268px;
    font-size: 7.5px;
    line-height: 11px;
    font-weight: 600;
    color: #eef0f5;
    white-space: nowrap;
  }
  .sim-bar {
    position: absolute;
    left: 986px;
    top: 7px;
    width: 289px;
    height: 37px;
    background: #37373a;
    border-radius: 9px;
    display: flex;
    align-items: center;
    color: #77777a;
  }
  .sim-dots {
    display: flex;
    gap: 5px;
    margin-left: 14px;
  }
  .sim-dots i {
    width: 8px;
    height: 8px;
    border-radius: 50%;
    background: #59595c;
  }
  .sim-name {
    margin-left: 13px;
    display: flex;
    flex-direction: column;
    gap: 1px;
  }
  .sim-name b {
    font-size: 9px;
    font-weight: 600;
    color: #6f6f72;
  }
  .sim-name span {
    font-size: 7px;
    color: #626265;
  }
  .sim-tools {
    margin-left: auto;
    margin-right: 18px;
    display: flex;
    align-items: center;
    gap: 17px;
  }
  .side-key {
    position: absolute;
    left: 990px;
    width: 4px;
    background: #4a2f5e;
    border-radius: 1px;
  }
  .k1 { top: 156px; height: 19px; }
  .k2 { top: 194px; height: 40px; }
  .k3 { top: 245px; height: 41px; }
  .iphone {
    position: absolute;
    left: 994px;
    top: 51px;
    width: 274px;
    height: 571px;
    box-sizing: border-box;
    background: #000;
    border: 1.5px solid #4a4a4c;
    border-radius: 48px;
    padding: 9px 9px 8px;
  }
  .display {
    position: relative;
    height: 100%;
    background: #fff;
    border-radius: 37px;
    overflow: hidden;
    color: #111;
  }
  .island {
    position: absolute;
    left: 86px;
    top: 7px;
    width: 80px;
    height: 24px;
    background: #000;
    border-radius: 12px;
  }
  .status {
    height: 37px;
    display: flex;
    align-items: center;
    padding: 0 23px 0 33px;
    justify-content: space-between;
  }
  .clock {
    font-size: 11.5px;
    font-weight: 600;
    color: #000;
  }
  .status-r {
    display: flex;
    align-items: center;
    gap: 5px;
  }
  .sig {
    font-size: 8px;
    color: #aaa;
  }
  .batt {
    width: 14px;
    height: 5px;
    background: #000;
    border: 1px solid #a8a8a8;
    border-radius: 2.5px;
    display: block;
  }
  .ribbon {
    position: absolute;
    right: -18px;
    top: 8px;
    width: 70px;
    height: 12px;
    line-height: 12px;
    background: #a83a50;
    color: #fff;
    font-size: 6.5px;
    font-weight: 800;
    text-align: center;
    transform: rotate(45deg);
  }
  .phone-text {
    font-size: 9px;
    line-height: 11px;
    color: #111;
    padding-top: 2px;
  }
  .home-bar {
    position: absolute;
    left: 81px;
    bottom: 6px;
    width: 90px;
    height: 2.5px;
    background: #111;
    border-radius: 2px;
  }
</style>
